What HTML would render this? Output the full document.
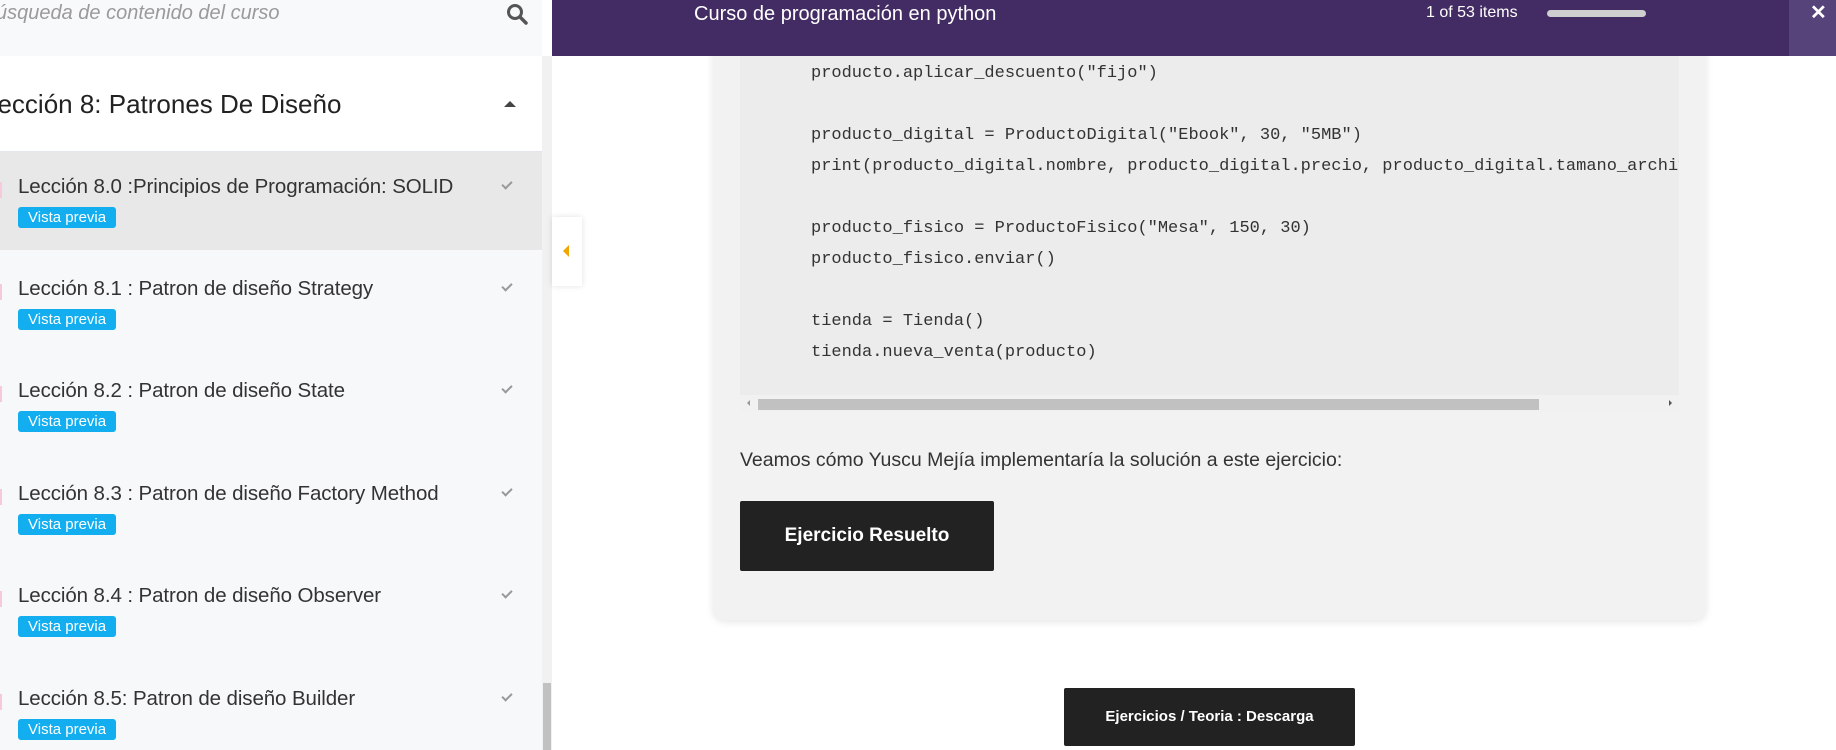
<!DOCTYPE html>
<html><head><meta charset="utf-8"><style>
*{margin:0;padding:0;box-sizing:border-box}
body{width:1836px;height:750px;overflow:hidden;background:#fff;font-family:"Liberation Sans",sans-serif;position:relative}
.side{position:absolute;left:0;top:0;width:542px;height:750px;background:#f7f8fa;overflow:hidden}
.search{height:56px;background:#f8f9fb;position:relative}
.search span{position:absolute;left:-4px;top:2px;font-size:20px;font-style:italic;color:#9a9a9a}
.sec{position:absolute;top:56px;left:0;width:542px;height:96px;background:#fff;border-bottom:1px solid #e3e6ee}
.sec span{position:absolute;left:-17px;top:33px;font-size:26px;color:#222}
.caret{position:absolute;left:504px;top:45px;width:0;height:0;border-left:6px solid transparent;border-right:6px solid transparent;border-bottom:6px solid #444}
.item{position:absolute;left:0;width:542px;height:98px;background:#f7f8fa}
.item.act{background:#e8e8e8}
.item .t{position:absolute;left:18px;top:23px;font-size:20.5px;color:#333;letter-spacing:-0.1px}
.item .b{position:absolute;left:18px;top:55px;height:21px;padding:0 10px;background:#12aef0;color:#fff;font-size:15px;line-height:21px;border-radius:3px}
.item .c{position:absolute;left:504px;top:27px;width:6px;height:10px;border-right:2px solid #999;border-bottom:2px solid #999;transform:rotate(45deg)}
.item .p{position:absolute;left:-2px;top:30px;width:4px;height:16px;background:#f6c9dc}
.sb{position:absolute;left:542px;top:56px;width:10px;height:694px;background:#f1f1f1}
.sb i{position:absolute;left:1px;top:627px;width:8px;height:67px;background:#c1c1c1}
.hdr{position:absolute;left:552px;top:0;width:1284px;height:56px;background:#432c63}
.hdr .x{position:absolute;right:0;top:0;width:47px;height:56px;background:#55437a;color:#fff;font-size:20px;font-weight:bold;padding:0 0 0 21px;line-height:26px}
.ttl{position:absolute;left:142px;top:3px;color:#fff;font-size:20px}
.cnt{position:absolute;left:874px;top:4px;color:#fff;font-size:16px}
.prog{position:absolute;left:995px;top:10px;width:99px;height:7px;border-radius:4px;background:#cfcfcf}
.tog{position:absolute;left:552px;top:217px;width:30px;height:69px;background:#fff;box-shadow:0 0 6px rgba(0,0,0,.12)}
.tog i{position:absolute;left:11px;top:28px;border-top:6px solid transparent;border-bottom:6px solid transparent;border-right:6px solid #f0a500}
.card{position:absolute;left:713px;top:30px;width:993px;height:590px;background:#f2f2f2;border-radius:0 0 12px 12px;box-shadow:0 2px 8px rgba(0,0,0,.1)}
.code{position:absolute;left:740px;top:56px;width:939px;height:356px;background:#ececec;overflow:hidden}
.code pre{position:absolute;left:71px;top:2px;font-family:"Liberation Mono",monospace;font-size:17px;line-height:31px;color:#333;white-space:pre}
.hs{position:absolute;left:740px;top:395px;width:939px;height:17px;background:#f1f1f1}
.hs i{position:absolute;left:18px;top:4px;width:781px;height:11px;background:#c1c1c1}
.hs b{position:absolute;top:5px;border-top:3px solid transparent;border-bottom:3px solid transparent}
.txt{position:absolute;left:740px;top:449px;font-size:19.5px;color:#333}
.btn{position:absolute;background:#222;color:#fff;font-weight:bold;text-align:center;border-radius:2px}
</style></head><body>
<div class="side">
<div class="search"><span>úsqueda de contenido del curso</span>
<svg style="position:absolute;left:506px;top:3px" width="22" height="22" viewBox="0 0 22 22"><circle cx="9" cy="9" r="6.5" fill="none" stroke="#555" stroke-width="3"/><line x1="14" y1="14" x2="20" y2="20" stroke="#555" stroke-width="3.5" stroke-linecap="round"/></svg></div>
<div class="sec"><span>Lección 8: Patrones De Diseño</span><div class="caret"></div></div>
<div class="item act" style="top:152px"><div class="p"></div><div class="t">Lección 8.0 :Principios de Programación: SOLID</div><div class="b">Vista previa</div><div class="c"></div></div>
<div class="item" style="top:254px"><div class="p"></div><div class="t">Lección 8.1 : Patron de diseño Strategy</div><div class="b">Vista previa</div><div class="c"></div></div>
<div class="item" style="top:356px"><div class="p"></div><div class="t">Lección 8.2 : Patron de diseño State</div><div class="b">Vista previa</div><div class="c"></div></div>
<div class="item" style="top:459px"><div class="p"></div><div class="t">Lección 8.3 : Patron de diseño Factory Method</div><div class="b">Vista previa</div><div class="c"></div></div>
<div class="item" style="top:561px"><div class="p"></div><div class="t">Lección 8.4 : Patron de diseño Observer</div><div class="b">Vista previa</div><div class="c"></div></div>
<div class="item" style="top:664px"><div class="p"></div><div class="t">Lección 8.5: Patron de diseño Builder</div><div class="b">Vista previa</div><div class="c"></div></div>
</div>
<div class="sb"><i></i></div>
<div class="card"></div>
<div class="code"><pre>producto.aplicar_descuento("fijo")

producto_digital = ProductoDigital("Ebook", 30, "5MB")
print(producto_digital.nombre, producto_digital.precio, producto_digital.tamano_archivo)

producto_fisico = ProductoFisico("Mesa", 150, 30)
producto_fisico.enviar()

tienda = Tienda()
tienda.nueva_venta(producto)</pre></div>
<div class="hs"><b style="left:7px;border-right:3px solid #999"></b><i></i><b style="right:7px;border-left:3px solid #555"></b></div>
<div class="txt">Veamos cómo Yuscu Mejía implementaría la solución a este ejercicio:</div>
<div class="btn" style="left:740px;top:501px;width:254px;height:70px;line-height:70px;font-size:19px">Ejercicio Resuelto</div>
<div class="btn" style="left:1064px;top:688px;width:291px;height:58px;line-height:58px;font-size:15px">Ejercicios / Teoria : Descarga</div>
<div class="hdr"><div class="ttl">Curso de programación en python</div><div class="cnt">1 of 53 items</div><div class="prog"></div><div class="x">✕</div></div>
<div class="tog"><i></i></div>
</body></html>
